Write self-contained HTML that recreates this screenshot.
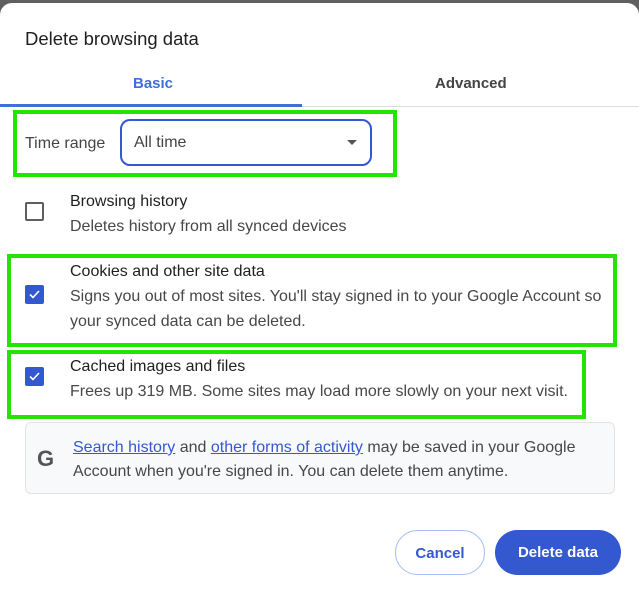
<!DOCTYPE html>
<html><head><style>
*{margin:0;padding:0;box-sizing:border-box}
body{width:639px;height:595px;background:#5f5f5f;font-family:"Liberation Sans",sans-serif;overflow:hidden;position:relative;color:#1f1f1f}
.dlg{position:absolute;left:0;top:3px;width:639px;height:600px;background:#fff;border-radius:12px 12px 0 0}
.a{position:absolute;white-space:nowrap}
.t{font-size:16px;color:#1f1f1f}
.d{font-size:16px;color:#474747}
.g{position:absolute;border:4px solid #22e400}
.cb{position:absolute;width:19px;height:19px;border-radius:2px}
.cb.off{border:2px solid #5e5e5e}
.cb.on{background:#3458cf}
a{color:#3558cf;text-decoration:underline}
</style></head><body>
<div class="dlg"></div>
<div class="a" style="left:25px;top:28px;font-size:18.5px;color:#1f1f1f">Delete browsing data</div>
<div class="a" style="left:133px;top:75px;font-size:15px;font-weight:bold;color:#3f6fd8">Basic</div>
<div class="a" style="left:435px;top:75px;font-size:15px;font-weight:bold;color:#444">Advanced</div>
<div class="a" style="left:0;top:106px;width:639px;height:1px;background:#ddd"></div>
<div class="a" style="left:0;top:104px;width:302px;height:3px;background:#3f6fd8"></div>

<div class="g" style="left:13px;top:110px;width:384px;height:67px"></div>
<div class="a t" style="left:25px;top:135px;color:#444">Time range</div>
<div class="a" style="left:120px;top:119px;width:252px;height:47px;border:2px solid #3458cf;border-radius:10px"></div>
<div class="a t" style="left:134px;top:134px;color:#444">All time</div>
<div class="a" style="left:347px;top:140px;width:0;height:0;border-left:5px solid transparent;border-right:5px solid transparent;border-top:5px solid #555"></div>

<div class="cb off" style="left:25px;top:202px"></div>
<div class="a t" style="left:70px;top:193px">Browsing history</div>
<div class="a d" style="left:70px;top:218px">Deletes history from all synced devices</div>

<div class="g" style="left:7px;top:254px;width:610px;height:93px"></div>
<div class="cb on" style="left:25px;top:285px"><svg width="19" height="19"><path d="M5 9.5l3 3 6-6.5" stroke="#fff" stroke-width="1.6" fill="none"/></svg></div>
<div class="a t" style="left:70px;top:263px">Cookies and other site data</div>
<div class="a d" style="left:70px;top:288px">Signs you out of most sites. You'll stay signed in to your Google Account so</div>
<div class="a d" style="left:70px;top:313px">your synced data can be deleted.</div>

<div class="g" style="left:7px;top:350px;width:579px;height:69px"></div>
<div class="cb on" style="left:25px;top:367px"><svg width="19" height="19"><path d="M5 9.5l3 3 6-6.5" stroke="#fff" stroke-width="1.6" fill="none"/></svg></div>
<div class="a t" style="left:70px;top:358px">Cached images and files</div>
<div class="a d" style="left:70px;top:383px">Frees up 319 MB. Some sites may load more slowly on your next visit.</div>

<div class="a" style="left:25px;top:422px;width:590px;height:72px;background:#f8f9fb;border:1px solid #e3e3e3;border-radius:6px"></div>
<div class="a" style="left:37px;top:446px;font-size:22px;font-weight:bold;color:#555">G</div>
<div class="a d" style="left:73px;top:439px"><a>Search history</a> and <a>other forms of activity</a> may be saved in your Google</div>
<div class="a d" style="left:73px;top:463px">Account when you're signed in. You can delete them anytime.</div>

<div class="a" style="left:395px;top:530px;width:90px;height:45px;border:1px solid #a8c0f0;border-radius:23px;font-size:15px;font-weight:bold;color:#3558cf;text-align:center;line-height:45px">Cancel</div>
<div class="a" style="left:495px;top:530px;width:126px;height:45px;background:#3458cf;border-radius:23px;font-size:15px;font-weight:bold;color:#fff;text-align:center;line-height:46px">Delete data</div>
</body></html>
